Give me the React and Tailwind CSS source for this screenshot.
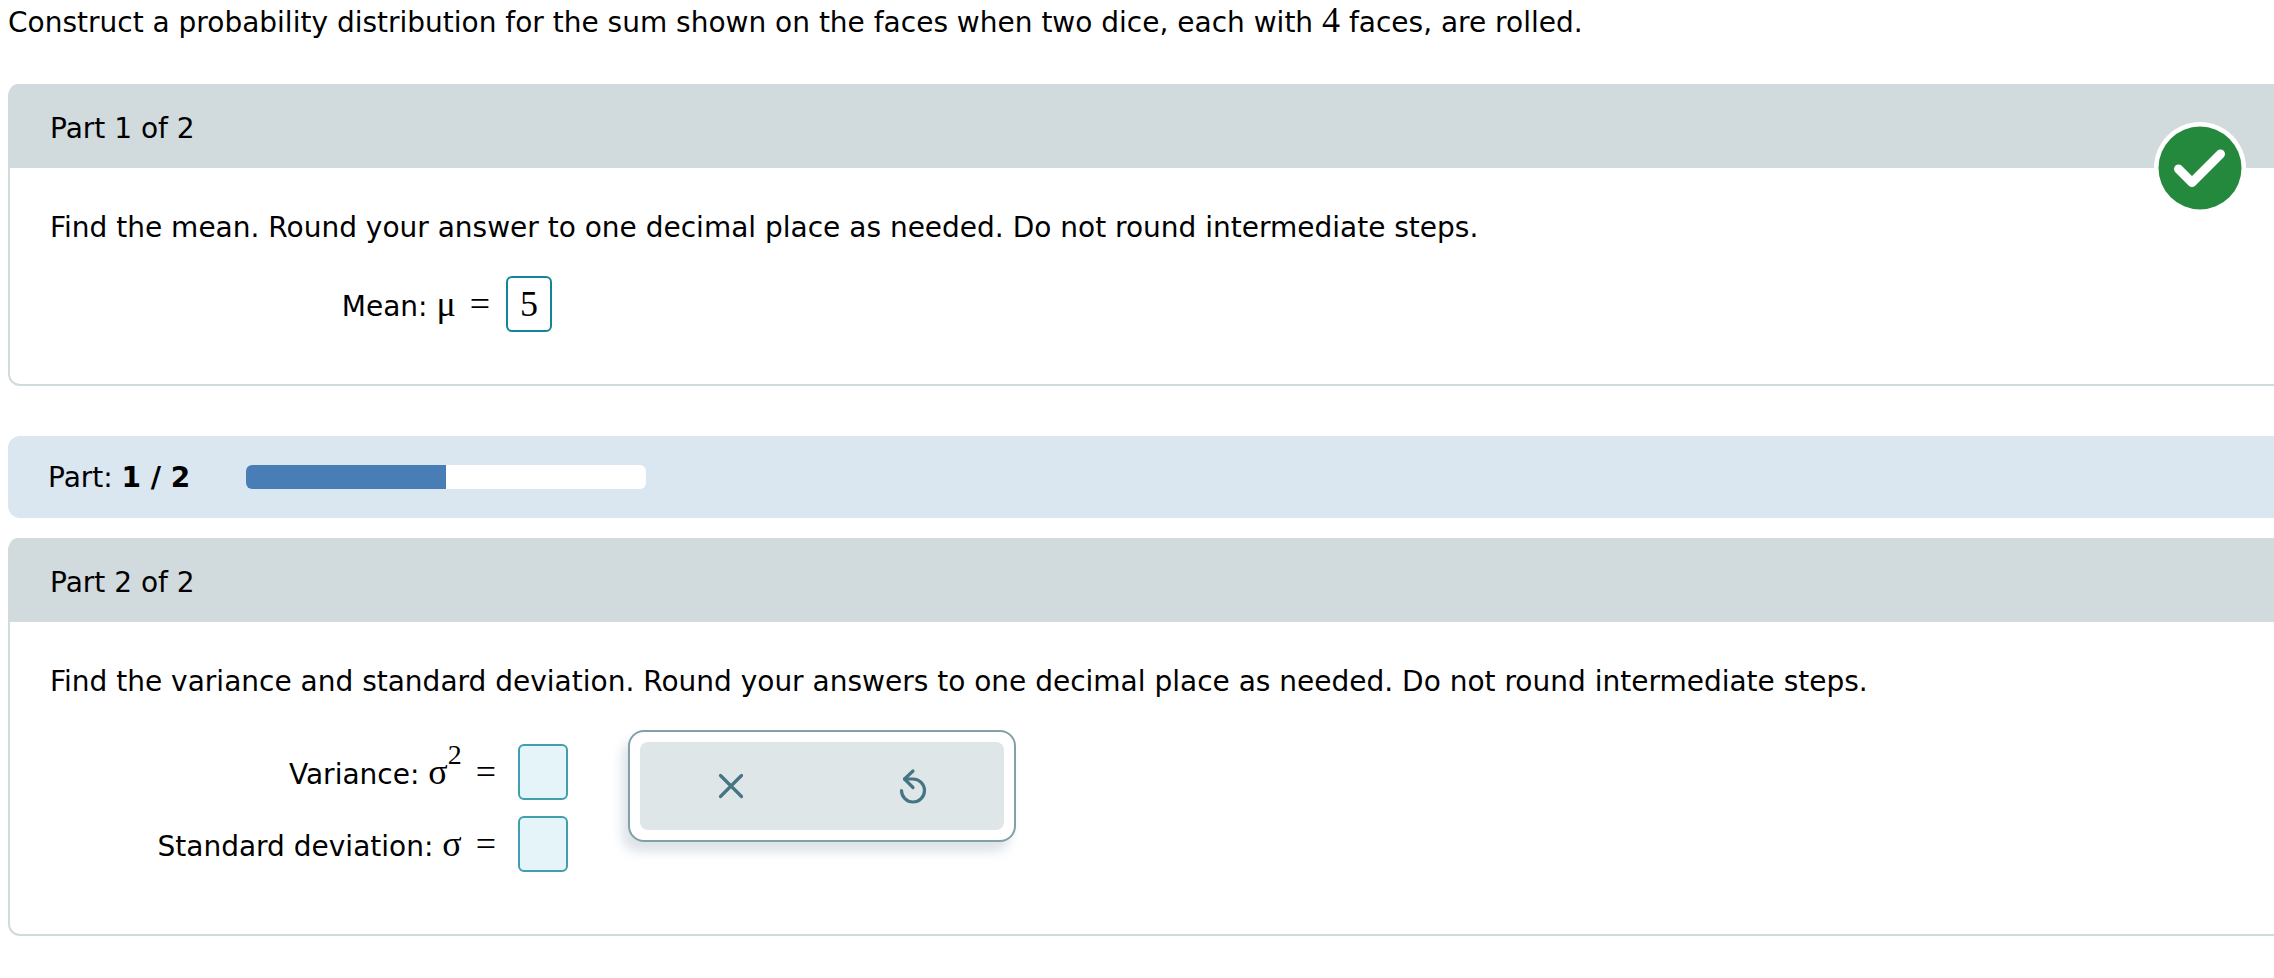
import React, { useState } from "react";

const Sym = ({ children }) => (
  <span className="font-['Liberation_Serif',serif] text-[36px]">{children}</span>
);

function Panel({ title, done, children }) {
  return (
    <section className="relative rounded-l-xl border-y-2 border-l-2 border-[#d1dadc] bg-white">
      <h2 className="-mt-0.5 flex h-[84px] items-center rounded-tl-lg bg-[#d1dadc] pl-10 pt-1.5">
        {title}
      </h2>
      {children}
      {done && (
        <svg
          className="absolute right-7 top-9 size-[92px]"
          viewBox="0 0 92 92"
          role="img"
          aria-label="Correct"
        >
          <circle cx="46" cy="46" r="46" fill="#fff" />
          <circle cx="46" cy="46" r="41.5" fill="#25893d" />
          <path
            d="M24.5 47L38 60.5L66.500 32"
            fill="none"
            stroke="#fff"
            strokeWidth="9"
            strokeLinecap="round"
            strokeLinejoin="round"
          />
        </svg>
      )}
    </section>
  );
}

function AnswerRow({ id, label, symbol, value, onChange }) {
  return (
    <div className="flex h-14 items-center">
      <label
        htmlFor={id}
        className="flex w-[448px] items-baseline justify-end gap-3.5 whitespace-nowrap pr-0.5 pt-0.5 leading-10"
      >
        <span>
          {label} <Sym>{symbol}</Sym>
        </span>
        <Sym>=</Sym>
      </label>
      <input
        id={id}
        type="text"
        value={value}
        onChange={(e) => onChange(e.target.value)}
        className="ml-5 h-14 w-[50px] rounded-md border-2 border-[#3f9fae] bg-[#e5f4f9] text-center font-['Liberation_Serif',serif] text-[36px] outline-none"
      />
    </div>
  );
}

export default function App() {
  const [variance, setVariance] = useState("");
  const [deviation, setDeviation] = useState("");

  const clearAll = () => {
    setVariance("");
    setDeviation("");
  };

  return (
    <main className="overflow-hidden bg-white pb-10 pl-2 font-['DejaVu_Sans',Verdana,sans-serif] text-[28px] leading-10 text-black">
      {/* Question */}
      <p className="mb-11 h-10">
        Construct a probability distribution for the sum shown on the faces when
        two dice, each with <Sym>4</Sym> faces, are rolled.
      </p>

      {/* Part 1, already answered */}
      <Panel title="Part 1 of 2" done>
        <div className="px-10 pb-[52px] pt-10">
          <p>
            Find the mean. Round your answer to one decimal place as needed. Do
            not round intermediate steps.
          </p>
          <div className="mt-7 flex h-14 items-center">
            <label
              htmlFor="mean"
              className="flex w-[442px] items-baseline justify-end gap-3.5 whitespace-nowrap pr-0.5 pt-0.5"
            >
              <span>
                Mean: <Sym>μ</Sym>
              </span>
              <Sym>=</Sym>
            </label>
            <input
              id="mean"
              type="text"
              value="5"
              readOnly
              className="ml-3.5 h-14 w-[46px] rounded-md border-2 border-[#168497] bg-white text-center font-['Liberation_Serif',serif] text-[36px] outline-none"
            />
          </div>
        </div>
      </Panel>

      {/* Progress */}
      <div className="mt-[50px] flex h-[82px] items-center gap-14 rounded-l-xl bg-[#dae6f0] pl-10">
        <span className="pt-0.5">
          Part: <b>1 / 2</b>
        </span>
        <div className="h-6 w-[400px] overflow-hidden rounded-md bg-white">
          <div className="h-full w-1/2 bg-[#497db6]" />
        </div>
      </div>

      {/* Part 2 */}
      <div className="mt-5">
        <Panel title="Part 2 of 2">
          <div className="px-10 pb-[62px] pt-10">
            <p>
              Find the variance and standard deviation. Round your answers to
              one decimal place as needed. Do not round intermediate steps.
            </p>
            <div className="mt-7 flex items-start gap-[60px]">
              <div className="mt-3.5 flex flex-col gap-4">
                <AnswerRow
                  id="variance"
                  label="Variance:"
                  symbol={
                    <>
                      σ<sup className="-top-5 align-baseline text-[28px] leading-none">2</sup>
                    </>
                  }
                  value={variance}
                  onChange={setVariance}
                />
                <AnswerRow
                  id="deviation"
                  label="Standard deviation:"
                  symbol="σ"
                  value={deviation}
                  onChange={setDeviation}
                />
              </div>

              <div className="rounded-2xl border-2 border-[#82a0a8] bg-white p-2.5 shadow-[-6px_10px_12px_#dde3e8]">
                <div className="flex h-[88px] w-[364px] rounded-lg bg-[#dfe6e8] text-[#457482]">
                  <button
                    type="button"
                    aria-label="Clear"
                    onClick={clearAll}
                    className="flex flex-1 items-center justify-center"
                  >
                    <svg className="size-10" viewBox="0 0 40 40" fill="none" stroke="currentColor" strokeWidth="3.2" strokeLinecap="round">
                      <path d="M9.500 9.500L30.500 30.500M30.500 9.500L9.500 30.500" />
                    </svg>
                  </button>
                  <button
                    type="button"
                    aria-label="Undo"
                    onClick={clearAll}
                    className="flex flex-1 items-center justify-center"
                  >
                    <svg className="size-10" viewBox="0 0 40 40" fill="none" stroke="currentColor" strokeWidth="3.2" strokeLinecap="round" strokeLinejoin="round">
                      <path d="M20 5L11.500 13L20 21.500" />
                      <path d="M11.500 13H20A11.500 11.500 0 1 1 8.500 24.500" />
                    </svg>
                  </button>
                </div>
              </div>
            </div>
          </div>
        </Panel>
      </div>
    </main>
  );
}
